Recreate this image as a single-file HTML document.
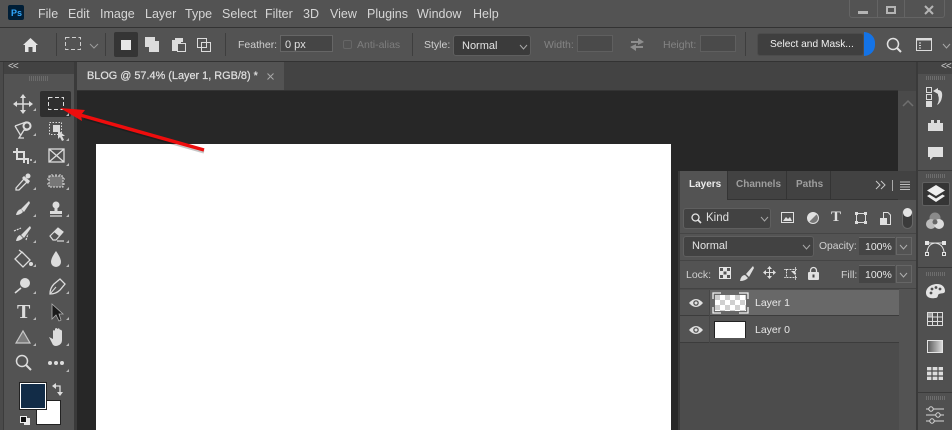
<!DOCTYPE html>
<html><head><meta charset="utf-8">
<style>
html,body{margin:0;padding:0;background:#535353}
#r{position:relative;width:952px;height:430px;overflow:hidden;background:#535353;font-family:"Liberation Sans",sans-serif;color:#d6d6d6;font-size:12px}
#r div,#r span.a{position:absolute}
.t{position:absolute;white-space:nowrap;line-height:14px}
svg{position:absolute;overflow:visible}
.box{background:#454545;border:1px solid #666;box-sizing:border-box;border-radius:2px}
.dk{background:#3b3b3b;border:1px solid #5f5f5f;box-sizing:border-box;border-radius:3px}
</style></head><body><div id="r">

<!-- menu bar -->
<div style="left:8px;top:5px;width:16px;height:15px;background:#001e36;border-radius:2px"></div>
<span class="t" style="left:11px;top:6px;font-size:9px;font-weight:bold;color:#31a8ff">Ps</span>
<span class="t" style="left:38px;top:7px;font-size:12.5px">File</span>
<span class="t" style="left:68px;top:7px;font-size:12.5px">Edit</span>
<span class="t" style="left:100px;top:7px;font-size:12.5px">Image</span>
<span class="t" style="left:145px;top:7px;font-size:12.5px">Layer</span>
<span class="t" style="left:185px;top:7px;font-size:12.5px">Type</span>
<span class="t" style="left:222px;top:7px;font-size:12.5px">Select</span>
<span class="t" style="left:265px;top:7px;font-size:12.5px">Filter</span>
<span class="t" style="left:303px;top:7px;font-size:12.5px">3D</span>
<span class="t" style="left:330px;top:7px;font-size:12.5px">View</span>
<span class="t" style="left:367px;top:7px;font-size:12.5px">Plugins</span>
<span class="t" style="left:417px;top:7px;font-size:12.5px">Window</span>
<span class="t" style="left:473px;top:7px;font-size:12.5px">Help</span>
<!-- window buttons -->
<div style="left:849px;top:-1px;width:96px;height:19px;border:1px solid #646464;box-sizing:border-box;border-radius:0 0 3px 3px"></div>
<div style="left:877px;top:0;width:1px;height:18px;background:#646464"></div>
<div style="left:904px;top:0;width:1px;height:18px;background:#646464"></div>
<div style="left:858px;top:11px;width:10px;height:3px;background:#b4b4b4"></div>
<div style="left:886px;top:6px;width:10px;height:8px;border:2px solid #b4b4b4;box-sizing:border-box"></div>
<svg style="left:924px;top:5px" width="10" height="10"><path d="M1 1L9 9M9 1L1 9" stroke="#b4b4b4" stroke-width="2"/></svg>
<div style="left:0;top:27px;width:952px;height:1px;background:#333"></div>

<!-- options bar -->
<svg style="left:22px;top:36px" width="18" height="18"><path d="M1 9L8.500 2L16 9H14V16H10.500V11H6.500V16H3V9Z" fill="#e4e4e4"/></svg>
<div style="left:56px;top:33px;width:1px;height:23px;background:#3e3e3e"></div>
<svg style="left:65px;top:37px" width="16" height="13"><rect x=".5" y=".5" width="15" height="12" fill="none" stroke="#d0d0d0" stroke-dasharray="4 2.500"/></svg>
<svg style="left:89px;top:43px" width="10" height="6"><path d="M1 1L5 5L9 1" fill="none" stroke="#9c9c9c"/></svg>
<div style="left:105px;top:33px;width:1px;height:23px;background:#3e3e3e"></div>
<div style="left:114px;top:32px;width:24px;height:25px;background:#353535;border-radius:2px"></div>
<div style="left:121px;top:40px;width:10px;height:10px;background:#e8e8e8"></div>
<svg style="left:145px;top:37px" width="15" height="16"><rect x="0" y="0" width="10" height="10" fill="#dcdcdc"/><rect x="4" y="4" width="10" height="11" fill="#dcdcdc"/></svg>
<svg style="left:172px;top:38px" width="15" height="15"><rect x="0" y="2" width="9" height="11" fill="#dcdcdc"/><rect x="3" y="0" width="8" height="4" fill="#dcdcdc"/><rect x="5.500" y="5.500" width="8" height="8" fill="#535353" stroke="#dcdcdc"/></svg>
<svg style="left:197px;top:38px" width="15" height="15"><rect x=".5" y=".5" width="9" height="9" fill="none" stroke="#dcdcdc"/><rect x="4.500" y="4.500" width="9" height="9" fill="none" stroke="#dcdcdc"/></svg>
<div style="left:225px;top:33px;width:1px;height:23px;background:#3e3e3e"></div>
<span class="t" style="left:238px;top:38px;font-size:10.500px;color:#cfcfcf">Feather:</span>
<div class="box" style="left:280px;top:35px;width:53px;height:17px;border-radius:0"></div>
<span class="t" style="left:285px;top:38px;font-size:11px;color:#e0e0e0">0 px</span>
<div style="left:343px;top:40px;width:9px;height:9px;border:1px solid #666;box-sizing:border-box;border-radius:2px"></div>
<span class="t" style="left:357px;top:38px;font-size:10.500px;color:#7e7e7e">Anti-alias</span>
<div style="left:412px;top:33px;width:1px;height:23px;background:#3e3e3e"></div>
<span class="t" style="left:424px;top:38px;font-size:10.500px;color:#cfcfcf">Style:</span>
<div class="dk" style="left:453px;top:35px;width:78px;height:21px"></div>
<span class="t" style="left:462px;top:39px;font-size:11px;color:#e4e4e4">Normal</span>
<svg style="left:519px;top:44px" width="9" height="6"><path d="M1 1L4.500 5L8 1" fill="none" stroke="#a8a8a8"/></svg>
<span class="t" style="left:544px;top:38px;font-size:10.500px;color:#848484">Width:</span>
<div style="left:577px;top:35px;width:36px;height:17px;background:#4a4a4a;border:1px solid #5f5f5f;box-sizing:border-box"></div>
<svg style="left:629px;top:37px" width="16" height="15"><path d="M2 5H10M14 10H6" stroke="#8e8e8e" stroke-width="2"/><path d="M9 1L15 5L9 8ZM7 7L1 10L7 14Z" fill="#8e8e8e"/></svg>
<span class="t" style="left:663px;top:38px;font-size:10.500px;color:#848484">Height:</span>
<div style="left:700px;top:35px;width:36px;height:17px;background:#4a4a4a;border:1px solid #5f5f5f;box-sizing:border-box"></div>
<div style="left:745px;top:32px;width:1px;height:24px;background:#3e3e3e"></div>
<div class="dk" style="left:757px;top:33px;width:107px;height:23px;border-color:#4c4c4c;background:#3f3f3f"></div>
<span class="t" style="left:770px;top:38px;font-size:10.200px;color:#f2f2f2">Select and Mask...</span>
<div style="left:864px;top:32px;width:11px;height:24px;background:#1473e6;border-radius:0 12px 12px 0"></div>
<svg style="left:886px;top:37px" width="16" height="17"><circle cx="7" cy="7" r="5.500" fill="none" stroke="#e2e2e2" stroke-width="1.500"/><path d="M11 11L15 15" stroke="#e2e2e2" stroke-width="2"/></svg>
<svg style="left:916px;top:38px" width="16" height="14"><rect x=".5" y=".5" width="15" height="12" fill="none" stroke="#dcdcdc"/><rect x=".5" y=".5" width="15" height="2" fill="#dcdcdc"/><path d="M3 5H5M3 7.500H5M3 10H5" stroke="#dcdcdc"/></svg>
<svg style="left:942px;top:43px" width="9" height="6"><path d="M1 1L4.500 5L8 1" fill="none" stroke="#a8a8a8"/></svg>
<div style="left:0;top:61px;width:952px;height:1px;background:#333"></div>

<!-- tab row + canvas -->
<div style="left:77px;top:62px;width:840px;height:29px;background:#434343"></div>
<div style="left:77px;top:62px;width:207px;height:28px;background:#535353"></div>
<span class="t" style="left:87px;top:69px;font-size:10.900px;color:#dedede;-webkit-text-stroke:.25px #dedede">BLOG @ 57.4% (Layer 1, RGB/8) *</span>
<svg style="left:266px;top:72px" width="9" height="9"><path d="M1.500 1.500L7.500 7.500M7.500 1.500L1.500 7.500" stroke="#a8a8a8"/></svg>
<div style="left:77px;top:90px;width:821px;height:340px;background:#272727"></div>
<div style="left:77px;top:90px;width:821px;height:1px;background:#333"></div>
<div style="left:96px;top:144px;width:575px;height:286px;background:#fff"></div>
<!-- doc scrollbar -->
<div style="left:898px;top:91px;width:18px;height:339px;background:#4a4a4a"></div>
<svg style="left:902px;top:100px" width="12" height="7"><path d="M1 6L6 1L11 6" fill="none" stroke="#6f6f6f" stroke-width="1.500"/></svg>

<!-- left toolbar -->
<div style="left:0;top:62px;width:3px;height:368px;background:#4a4a4a"></div>
<div style="left:3px;top:62px;width:1px;height:368px;background:#3c3c3c"></div>
<div style="left:4px;top:62px;width:70px;height:12px;background:#424242"></div>
<span class="t" style="left:8px;top:60px;font-size:10px;color:#cfcfcf;letter-spacing:-1px">&lt;&lt;</span>
<div style="left:29px;top:76px;width:19px;height:5px;background:repeating-linear-gradient(90deg,#6b6b6b 0 1px,transparent 1px 2px)"></div>
<div style="left:74px;top:62px;width:3px;height:368px;background:#3a3a3a"></div>
<div style="left:40px;top:91px;width:31px;height:26px;background:#2f2f2f;border-radius:2px"></div>

<!-- tool icons -->
<svg style="left:0;top:80px" width="77" height="350" viewBox="0 80 77 350" fill="none">
<g stroke="#dcdcdc" fill="#dcdcdc">
<!-- move -->
<path d="M23 97V111M16 104H30" stroke-width="1.500"/><path d="M23 94L20 98H26ZM23 114L20 110H26ZM13 104L17 101V107ZM33 104L29 101V107Z" stroke="none"/>
<!-- lasso -->
<path d="M15 126L26 122Q32 122 30 128Q28 131 24 130L19 138L24 138M15 126L21 136" stroke-width="1.300" fill="none"/><circle cx="27" cy="126" r="3.500" fill="none" stroke-width="2"/>
<!-- crop -->
<path d="M17 148V159H28V164M13 152H24V163" fill="none" stroke-width="2"/>
<path d="M30 160H32" stroke-width="1.500"/>
<!-- dropper -->
<path d="M16 188L24 179L27 182L19 190L16 190Z" fill="none" stroke-width="1.300"/><path d="M24 176L30 181L28 184L22 178Z" stroke="none"/><circle cx="28" cy="176" r="2.500" stroke="none"/>
<!-- brush -->
<path d="M29 201L21 209L24 212L30 203Z" stroke="none"/><path d="M16 215Q17 210 21 209L23 212Q20 215 16 215Z" stroke="none"/>
<!-- healing brush -->
<path d="M30 226L21 235L24 238L31 228Z" stroke="none"/><path d="M16 241Q17 236 20 235L23 238Q20 241 16 241Z" stroke="none"/><path d="M14 231L21 228M26 240L28 234" stroke-width="1.200" stroke-dasharray="2 1"/>
<!-- bucket -->
<path d="M15 259L22 252L30 260L23 267Z" fill="none" stroke-width="1.300"/><path d="M19 250L23 253" stroke-width="1.300"/><circle cx="31" cy="264" r="2" stroke="none"/>
<!-- dodge -->
<circle cx="25" cy="283" r="5" stroke="none"/><path d="M21 288L15 293" stroke-width="1.600"/>
<!-- triangle -->
<path d="M16 343L23 331L30 343Z" fill="#7c7c7c" stroke="#c8c8c8" stroke-width="1.200"/>
<!-- zoom -->
<circle cx="22" cy="361" r="5.500" fill="none" stroke-width="1.500"/><path d="M26 365L31 370" stroke-width="2"/>

<!-- marquee -->
<rect x="48.500" y="97.500" width="15" height="12" stroke="#e0e0e0" fill="none" stroke-dasharray="4 2.500"/>
<!-- object sel -->
<rect x="49.500" y="122.500" width="12" height="12" stroke-dasharray="1.500 1.500" fill="none"/><rect x="53" y="125" width="7" height="7" stroke="none"/><path d="M58 130V139L60 137L62 141L64 140L62 136H65Z" stroke="none"/>
<!-- frame -->
<rect x="49" y="149" width="15" height="13" fill="none" stroke-width="1.300"/><path d="M49 149L64 162M64 149L49 162" stroke-width="1.300"/>
<!-- patch -->
<rect x="49" y="176" width="14" height="11" fill="#777" stroke-width="1" stroke-dasharray="2 1"/><path d="M52 174V189M56 174V189M60 174V189M47 179H65M47 184H65" stroke-width="1" stroke-dasharray="1.500 15" />
<!-- stamp -->
<circle cx="56" cy="205" r="3.500" stroke="none"/><path d="M54.500 208H57.500V211H54.500Z" stroke="none"/><path d="M50 211H62V214H50Z" stroke="none"/><path d="M50 216H62" stroke-width="1.300"/>
<!-- eraser -->
<path d="M50 236L58 228L63 232L56 240H53Z" fill="none" stroke-width="1.200"/><path d="M54 232L58 228L63 232L59 236Z" stroke="none"/><path d="M57 241H64" stroke-width="1.200"/>
<!-- drop -->
<path d="M56 251Q61 258 61 262A5 5 0 0 1 51 262Q51 258 56 251Z" stroke="none"/>
<!-- pen -->
<path d="M50 294Q50 288 54 284L60 279L65 284L60 290Q56 294 50 294Z" fill="none" stroke-width="1.300"/><path d="M50 294L56 287" stroke-width="1"/>
<!-- arrow -->
<path d="M52 304V319L56 315L59 321L61 320L59 314H63Z" fill="#1a1a1a" stroke="#b0b0b0" stroke-width=".8"/>
<!-- hand -->
<path d="M49 337L53 339V331Q54 329 55 331V329Q56 327 57.500 329V329Q59 327 60 330Q61 329 62 331V340Q62 345 56 346Q53 346 52 343Z" stroke="none"/>
<!-- dots -->
<circle cx="50" cy="363" r="2" stroke="none"/><circle cx="56" cy="363" r="2" stroke="none"/><circle cx="62" cy="363" r="2" stroke="none"/>
<!-- swap -->
<path d="M54 386H60V392" fill="none" stroke-width="1.300"/><path d="M56 383L52 386L56 389ZM57 392H63L60 396Z" stroke="none"/>
</g>
<!-- corner flyouts -->
<g fill="#b8b8b8">
<path d="M36 108V111H33ZM69 113V116H66ZM36 133V136H33ZM69 138V141H66ZM36 160V163H33ZM69 163V166H66ZM36 187V190H33ZM69 187V190H66ZM36 214V217H33ZM69 214V217H66ZM36 240V243H33ZM69 240V243H66ZM36 264V267H33ZM69 264V267H66ZM36 291V294H33ZM69 291V294H66ZM36 317V320H33ZM69 317V320H66ZM36 343V346H33ZM69 343V346H66ZM69 369V372H66Z"/>
</g>
</svg>
<span class="t" style="left:17px;top:302px;font-family:'Liberation Serif',serif;font-size:20px;line-height:20px;color:#dcdcdc;font-weight:bold">T</span>
<!-- colours -->
<div style="left:36px;top:400px;width:25px;height:25px;background:#fff;border:1px solid #222;box-sizing:border-box"></div>
<div style="left:20px;top:383px;width:26px;height:26px;background:#122c47;border:1px solid #fff;outline:1px solid #222;box-sizing:border-box"></div>
<div style="left:24px;top:418px;width:6px;height:7px;background:#e8e8e8"></div>
<div style="left:20px;top:416px;width:5px;height:5px;background:#111;border:1px solid #eee;box-sizing:content-box"></div>

<!-- arrow annotation -->
<svg style="left:0;top:0" width="952" height="430">
<path d="M204 152L84 118" stroke="rgba(0,0,0,.22)" stroke-width="3"/>
<path d="M204 150L80 115" stroke="#ee0d0d" stroke-width="3.500"/>
<path d="M60 108L85 110L81 115L82 121Z" fill="#ee0d0d"/>
</svg>

<!-- layers panel -->
<div style="left:680px;top:171px;width:218px;height:259px;background:#535353"></div>
<div style="left:678px;top:171px;width:2px;height:259px;background:#3a3a3a"></div>
<div style="left:727px;top:171px;width:171px;height:29px;background:#424242"></div>
<div style="left:727px;top:199px;width:171px;height:1px;background:#343434"></div>
<div style="left:727px;top:171px;width:1px;height:29px;background:#343434"></div>
<div style="left:786px;top:171px;width:1px;height:29px;background:#343434"></div>
<div style="left:830px;top:171px;width:1px;height:29px;background:#343434"></div>
<span class="t" style="left:689px;top:178px;font-size:10px;font-weight:bold;color:#ececec">Layers</span>
<span class="t" style="left:736px;top:178px;font-size:10px;font-weight:bold;color:#9e9e9e">Channels</span>
<span class="t" style="left:796px;top:178px;font-size:10px;font-weight:bold;color:#9e9e9e">Paths</span>
<svg style="left:875px;top:180px" width="12" height="10"><path d="M1 1L5 5L1 9M6 1L10 5L6 9" fill="none" stroke="#c8c8c8"/></svg>
<div style="left:892px;top:180px;width:1px;height:11px;background:#aaa"></div>
<div style="left:898px;top:171px;width:19px;height:29px;background:#424242"></div>
<svg style="left:900px;top:181px" width="10" height="9"><path d="M0 1H10M0 3.500H10M0 6H10M0 8.500H10" stroke="#c0c0c0"/></svg>
<div style="left:898px;top:200px;width:18px;height:230px;background:#535353"></div>

<div class="dk" style="left:683px;top:208px;width:88px;height:21px;background:#424242"></div>
<svg style="left:691px;top:213px" width="11" height="11"><circle cx="4.500" cy="4.500" r="3.500" fill="none" stroke="#e4e4e4" stroke-width="1.300"/><path d="M7 7L10 10" stroke="#e4e4e4" stroke-width="1.600"/></svg>
<span class="t" style="left:706px;top:211px;font-size:11.500px;color:#e0e0e0">Kind</span>
<svg style="left:760px;top:216px" width="9" height="6"><path d="M1 1L4.500 5L8 1" fill="none" stroke="#a8a8a8"/></svg>
<svg style="left:781px;top:212px" width="13" height="12"><rect x=".5" y=".5" width="12" height="10" fill="none" stroke="#e0e0e0"/><path d="M2 9L5 5L7 7L9 5L11 9Z" fill="#e0e0e0"/></svg>
<svg style="left:807px;top:212px" width="12" height="12"><circle cx="6" cy="6" r="5.500" fill="#777" stroke="#e0e0e0"/><path d="M2 10L10 2A5.500 5.500 0 0 1 2 10Z" fill="#e0e0e0" transform="rotate(180 6 6)"/></svg>
<span class="t" style="left:831px;top:210px;font-family:'Liberation Serif',serif;font-size:15px;font-weight:bold;color:#e0e0e0">T</span>
<svg style="left:855px;top:212px" width="12" height="12"><rect x="1.500" y="1.500" width="9" height="9" fill="none" stroke="#dcdcdc"/><path d="M0 0H3V3H0ZM9 0H12V3H9ZM0 9H3V12H0ZM9 9H12V12H9Z" fill="#dcdcdc"/></svg>
<svg style="left:880px;top:212px" width="11" height="13"><path d="M3.500 .5H8L10.500 3V12.500H3.500V.5Z" fill="none" stroke="#e0e0e0"/><rect x="0" y="6" width="7" height="7" fill="#e0e0e0"/></svg>
<div style="left:902px;top:208px;width:11px;height:21px;background:#3b3b3b;border:1px solid #666;box-sizing:border-box;border-radius:6px"></div>
<div style="left:903px;top:208px;width:9px;height:9px;background:#e4e4e4;border-radius:50%"></div>

<div style="left:680px;top:233px;width:236px;height:1px;background:#454545"></div>
<div class="dk" style="left:683px;top:236px;width:131px;height:21px;background:#424242"></div>
<span class="t" style="left:692px;top:239px;font-size:11px;color:#e4e4e4">Normal</span>
<svg style="left:802px;top:244px" width="9" height="6"><path d="M1 1L4.500 5L8 1" fill="none" stroke="#a8a8a8"/></svg>
<span class="t" style="left:819px;top:240px;font-size:10.300px;color:#d0d0d0">Opacity:</span>
<div style="left:859px;top:237px;width:36px;height:18px;background:#454545;border-top:1px solid #666;box-sizing:border-box"></div>
<span class="t" style="left:865px;top:240px;font-size:10.500px;color:#e8e8e8">100%</span>
<div style="left:896px;top:237px;width:16px;height:18px;border:1px solid #666;box-sizing:border-box"></div>
<svg style="left:899px;top:244px" width="9" height="6"><path d="M1 1L4.500 5L8 1" fill="none" stroke="#b0b0b0"/></svg>

<div style="left:680px;top:260px;width:236px;height:1px;background:#454545"></div>
<span class="t" style="left:686px;top:268px;font-size:10.500px;color:#d0d0d0">Lock:</span>
<svg style="left:719px;top:267px" width="12" height="12"><rect width="12" height="12" fill="#e4e4e4"/><path d="M1 1H4V4H1ZM8 1H11V4H8ZM4.500 4.500H7.500V7.500H4.500ZM1 8H4V11H1ZM8 8H11V11H8Z" fill="#555"/></svg>
<svg style="left:740px;top:266px" width="14" height="16"><path d="M13 0L6 8L9 11L14 2Z" fill="#dedede"/><path d="M0 15Q1 9 5 9L8 12Q5 15 0 15Z" fill="#dedede"/></svg>
<svg style="left:763px;top:266px" width="13" height="13"><path d="M6.500 1V12M1 6.500H12" stroke="#dedede"/><path d="M6.500 0L4 3H9ZM6.500 13L4 10H9ZM0 6.500L3 4V9ZM13 6.500L10 4V9Z" fill="#dedede"/></svg>
<svg style="left:784px;top:267px" width="14" height="13"><rect x="2.500" y="2.500" width="9" height="8" fill="none" stroke="#dedede" stroke-dasharray="2 1"/><path d="M0 2.500H14M11.500 0V13M2.500 2V13M0 10.500H14" stroke="#dedede" stroke-width=".8" stroke-dasharray="2 9"/><path d="M7 4H11V8Z" fill="#dedede"/></svg>
<svg style="left:808px;top:267px" width="11" height="13"><rect y="5" width="11" height="8" rx="1" fill="#e0e0e0"/><path d="M2.500 5V3.500A3 3 0 0 1 8.500 3.500V5" fill="none" stroke="#e0e0e0" stroke-width="1.300"/><rect x="4.500" y="7.500" width="2" height="3" fill="#444"/></svg>
<span class="t" style="left:841px;top:268px;font-size:10.500px;color:#d0d0d0">Fill:</span>
<div style="left:859px;top:265px;width:36px;height:18px;background:#454545;border-top:1px solid #666;box-sizing:border-box"></div>
<span class="t" style="left:865px;top:268px;font-size:10.500px;color:#e8e8e8">100%</span>
<div style="left:896px;top:265px;width:16px;height:18px;border:1px solid #666;box-sizing:border-box"></div>
<svg style="left:899px;top:272px" width="9" height="6"><path d="M1 1L4.500 5L8 1" fill="none" stroke="#b0b0b0"/></svg>

<div style="left:680px;top:288px;width:236px;height:1px;background:#434343"></div>
<div style="left:680px;top:289px;width:219px;height:141px;background:#4c4c4c"></div>
<!-- layer rows -->
<div style="left:680px;top:290px;width:219px;height:26px;background:#686868"></div>
<div style="left:680px;top:290px;width:30px;height:26px;background:#535353"></div>
<div style="left:680px;top:316px;width:219px;height:27px;background:#535353"></div>
<div style="left:680px;top:315px;width:219px;height:1px;background:#3c3c3c"></div>
<div style="left:680px;top:342px;width:219px;height:1px;background:#3c3c3c"></div>
<div style="left:709px;top:290px;width:1px;height:53px;background:#474747"></div>
<svg style="left:689px;top:298px" width="14" height="10"><path d="M0 5Q7 -3 14 5Q7 13 0 5Z" fill="#e0e0e0"/><circle cx="7" cy="5" r="2.800" fill="#535353"/><circle cx="7" cy="5" r="1.500" fill="#e0e0e0"/></svg>
<svg style="left:689px;top:325px" width="14" height="10"><path d="M0 5Q7 -3 14 5Q7 13 0 5Z" fill="#e0e0e0"/><circle cx="7" cy="5" r="2.800" fill="#535353"/><circle cx="7" cy="5" r="1.500" fill="#e0e0e0"/></svg>
<svg style="left:712px;top:292px" width="37" height="22">
<defs><pattern id="ck" width="10" height="10" patternUnits="userSpaceOnUse" x="3" y="3"><rect width="10" height="10" fill="#fff"/><rect width="5" height="5" fill="#cfcfcf"/><rect x="5" y="5" width="5" height="5" fill="#cfcfcf"/></pattern></defs>
<rect x="3" y="3" width="31" height="16" fill="url(#ck)"/>
<path d="M1 7V1H9M27 1H36V7M1 15V21H9M27 21H36V15" fill="none" stroke="#f0f0f0" stroke-width="1.300"/>
</svg>
<div style="left:714px;top:321px;width:32px;height:17px;background:#fff;border-top:1px solid #222;border-left:1px solid #222;border-right:1px solid #222;box-sizing:border-box"></div>
<span class="t" style="left:755px;top:296px;font-size:10.500px;color:#e8e8e8">Layer 1</span>
<span class="t" style="left:755px;top:323px;font-size:10.500px;color:#e8e8e8">Layer 0</span>

<!-- right dock -->
<div style="left:916px;top:62px;width:2px;height:368px;background:#3a3a3a"></div>
<div style="left:918px;top:62px;width:34px;height:368px;background:#505050"></div>
<div style="left:918px;top:62px;width:34px;height:12px;background:#444"></div>
<span class="t" style="left:941px;top:60px;font-size:10px;color:#cfcfcf;letter-spacing:-1px">&lt;&lt;</span>
<div style="left:926px;top:76px;width:19px;height:4px;background:repeating-linear-gradient(90deg,#6d6d6d 0 1px,transparent 1px 2px)"></div>
<div style="left:918px;top:170px;width:34px;height:1px;background:#3a3a3a"></div>
<div style="left:926px;top:174px;width:19px;height:4px;background:repeating-linear-gradient(90deg,#6d6d6d 0 1px,transparent 1px 2px)"></div>
<div style="left:922px;top:182px;width:28px;height:24px;background:#353535;border:1px solid #606060;box-sizing:border-box;border-radius:2px"></div>
<svg style="left:927px;top:185px" width="18" height="18"><path d="M9 0L18 5.500L9 11L0 5.500Z" fill="#efefef"/><path d="M2.500 9.500L0 11L9 17L18 11L15.500 9.500L9 13.500Z" fill="#efefef"/></svg>
<svg style="left:926px;top:87px" width="20" height="22"><rect x=".5" y=".5" width="5" height="5" fill="none" stroke="#dcdcdc"/><rect x=".5" y="7.500" width="5" height="5" fill="none" stroke="#dcdcdc"/><rect x="0" y="14" width="6" height="6" fill="#dcdcdc"/><path d="M7 4L12 1V3Q17 3 16 10Q15 16 11 18Q14 13 12 8L12 7L7 4Z" fill="#dcdcdc"/></svg>
<svg style="left:928px;top:120px" width="15" height="11"><path d="M0 3H3V0H6V3H9V0H12V3H15V11H0Z" fill="#dcdcdc"/></svg>
<svg style="left:928px;top:146px" width="15" height="15"><path d="M0 1H15V11H5L2 14V11H0Z" fill="#e0e0e0"/></svg>
<svg style="left:926px;top:212px" width="18" height="19"><circle cx="9" cy="6" r="5.500" fill="#8a8a8a"/><circle cx="5" cy="12" r="5" fill="#bcbcbc"/><circle cx="13" cy="12" r="5" fill="#dcdcdc"/><circle cx="9" cy="10" r="2.500" fill="#666"/></svg>
<svg style="left:925px;top:240px" width="21" height="17"><rect x="0" y="1" width="4" height="4" fill="#e4e4e4"/><rect x="17" y="1" width="4" height="4" fill="#e4e4e4"/><rect x=".5" y="12.500" width="3" height="3" fill="none" stroke="#e4e4e4"/><rect x="17.500" y="12.500" width="3" height="3" fill="none" stroke="#e4e4e4"/><path d="M4 3H17M2 12Q3 4 10 3Q18 4 19 12" fill="none" stroke="#e4e4e4"/></svg>
<div style="left:918px;top:267px;width:34px;height:1px;background:#3a3a3a"></div>
<div style="left:926px;top:272px;width:19px;height:4px;background:repeating-linear-gradient(90deg,#6d6d6d 0 1px,transparent 1px 2px)"></div>
<svg style="left:926px;top:284px" width="19" height="15"><path d="M0 9C0 3 6 0 11 0C16 0 19 3 19 7C19 10 15 9 13 10C11 11 13 14 9 14C4 15 0 13 0 9Z" fill="#e4e4e4"/><circle cx="5" cy="9" r="1.400" fill="#505050"/><circle cx="6" cy="5" r="1.400" fill="#505050"/><circle cx="10" cy="3.500" r="1.400" fill="#505050"/><circle cx="14" cy="5" r="1.400" fill="#505050"/></svg>
<svg style="left:927px;top:312px" width="16" height="14"><rect x=".5" y=".5" width="15" height="13" fill="none" stroke="#dcdcdc"/><path d="M5.500 0V14M10.500 0V14M0 5H16M0 9.500H16" stroke="#dcdcdc"/><rect x="1" y="1" width="4" height="3.500" fill="#a0a0a0"/></svg>
<div style="left:927px;top:340px;width:16px;height:13px;background:linear-gradient(90deg,#5c5c5c,#d8d8d8);border:1px solid #e4e4e4;box-sizing:border-box"></div>
<svg style="left:927px;top:367px" width="16" height="13"><rect width="16" height="13" fill="#dcdcdc"/><path d="M0 4H16M0 9H16M5 0V13M11 0V13" stroke="#4a4a4a" stroke-width="1.200"/></svg>
<div style="left:918px;top:392px;width:34px;height:1px;background:#3a3a3a"></div>
<div style="left:926px;top:396px;width:19px;height:4px;background:repeating-linear-gradient(90deg,#6d6d6d 0 1px,transparent 1px 2px)"></div>
<svg style="left:926px;top:406px" width="18" height="18"><path d="M0 3H18M0 9H18M0 15H18" stroke="#d8d8d8"/><circle cx="5" cy="3" r="2.200" fill="#505050" stroke="#d8d8d8"/><circle cx="12" cy="9" r="2.200" fill="#505050" stroke="#d8d8d8"/><circle cx="6" cy="15" r="2.200" fill="#505050" stroke="#d8d8d8"/></svg>

</div></body></html>
